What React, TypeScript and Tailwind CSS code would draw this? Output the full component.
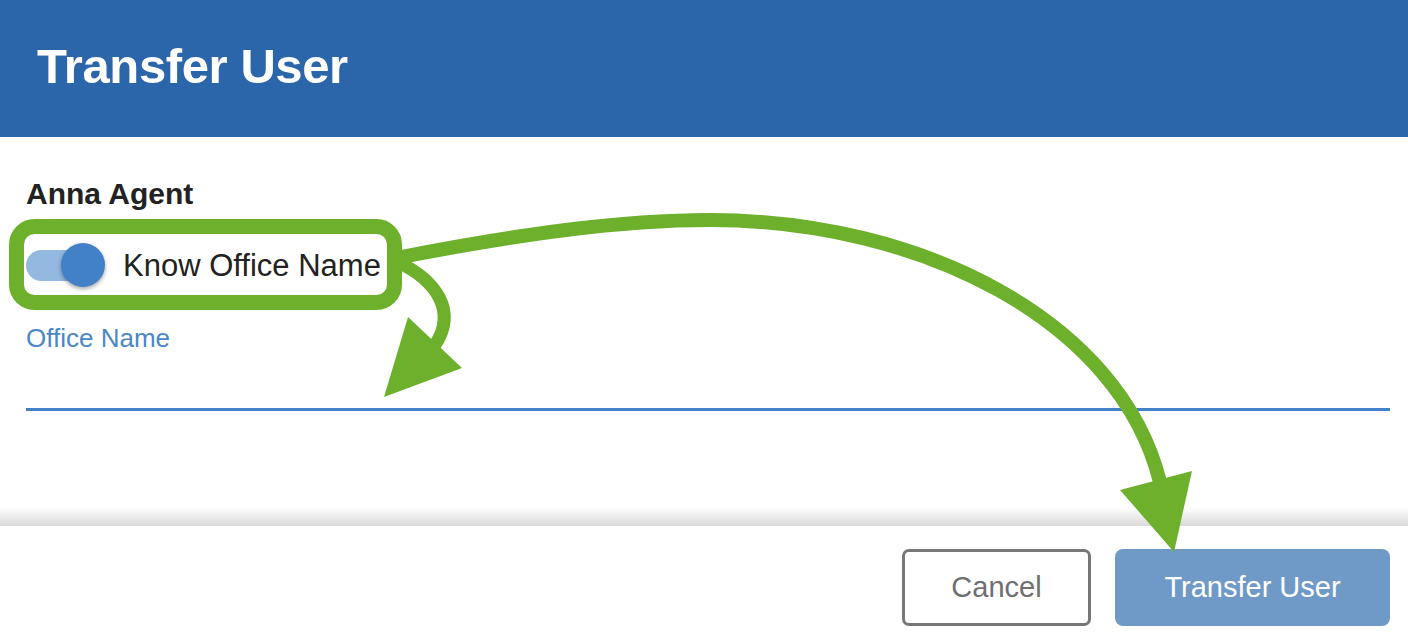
import React from "react";

export default function App() {
  const font = { fontFamily: '"Liberation Sans", Arial, Helvetica, sans-serif' };
  return (
    <div className="relative w-[1408px] h-[640px] overflow-hidden bg-white" style={font}>
      <div className="h-[137px] bg-[#2c66aa] flex items-center pl-[37px] pb-[4px]">
        <h1 className="text-[49px] leading-none font-bold text-white tracking-[-0.4px]">Transfer User</h1>
      </div>
      <div className="h-[370px] px-[26px] pt-[42px]">
        <div className="text-[30px] leading-none font-bold text-[#222]">Anna Agent</div>
        <div className="mt-[34px] flex items-center h-[44px]">
          <div className="relative w-[79px] h-[44px] flex items-center">
            <div className="w-[74px] h-[31px] rounded-full bg-[#93b9e1]" />
            <div className="absolute right-0 top-0 w-[44px] h-[44px] rounded-full bg-[#4280c7] shadow-[0_2px_4px_rgba(0,0,0,0.35)]" />
          </div>
          <span className="ml-[18px] text-[31px] leading-none text-[#222]">Know Office Name</span>
        </div>
        <div className="mt-[38px] text-[26px] leading-none text-[#4a87c9]">Office Name</div>
        <div className="h-[60px] border-b-[3px] border-[#4281c6] mr-[-8px]" />
      </div>
      <div className="h-[19px] bg-gradient-to-b from-white to-[#dadada]" />
      <div className="h-[114px] flex justify-end items-start pt-[23px] pr-[18px] gap-[24px]">
        <button className="w-[189px] h-[77px] rounded-[7px] border-[3px] border-[#777] bg-white text-[29px] text-[#6f6f6f]">
          Cancel
        </button>
        <button className="w-[275px] h-[77px] rounded-[8px] bg-[#6f9ac8] text-[29px] text-white">
          Transfer User
        </button>
      </div>
      <svg className="absolute inset-0 pointer-events-none" width="1408" height="640" viewBox="0 0 1408 640">
        <rect x="16.5" y="226.5" width="378" height="76" rx="18" fill="none" stroke="#6cb02b" strokeWidth="15" />
        <path d="M 396 258 C 520 234, 620 220, 710 220 C 920 220, 1120 320, 1160 482" fill="none" stroke="#6cb02b" strokeWidth="14" />
        <polygon points="1120,490 1192,471 1174,552" fill="#6cb02b" />
        <path d="M 398 262 C 435 280, 458 310, 435 345" fill="none" stroke="#6cb02b" strokeWidth="13" />
        <polygon points="408,317 462,368 384,397" fill="#6cb02b" />
      </svg>
    </div>
  );
}
